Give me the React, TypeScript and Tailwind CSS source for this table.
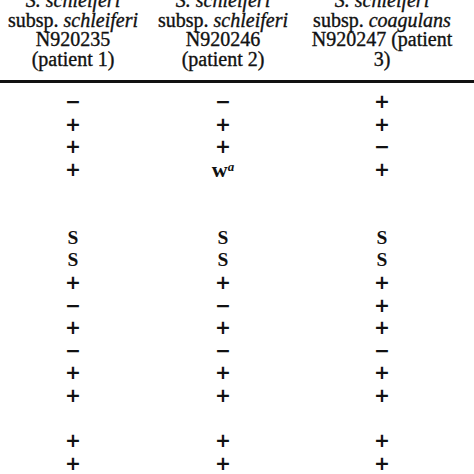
import React from "react";

type Cell = React.ReactNode;

// the scan uses heavy, wide plus/minus signs
const P = <span className="[font-family:'DejaVu_Sans',sans-serif] text-[19px] font-bold">+</span>;
const M = <span className="[font-family:'DejaVu_Sans',sans-serif] text-[19px] font-bold">−</span>;
const S = <span className="text-[19.5px] font-bold">S</span>;
const W = (
  <span className="text-[22px] font-bold">
    w<span className="relative -top-[6px] text-[13px] italic">a</span>
  </span>
);

const rows: (Cell[] | null)[] = [
  [M, M, P],
  [P, P, P],
  [P, P, M],
  [P, W, P],
  null,
  null,
  [S, S, S],
  [S, S, S],
  [P, P, P],
  [M, M, P],
  [P, P, P],
  [M, M, M],
  [P, P, P],
  [P, P, P],
  null,
  [P, P, P],
  [P, P, P],
];

export default function App() {
  return (
    <main
      className="h-[474px] w-[474px] overflow-hidden bg-white text-[#111]"
      style={{ fontFamily: '"Liberation Serif", "Times New Roman", serif' }}
    >
      {/* Header */}
      <div className="-mt-[9px] grid grid-cols-[146px_154px_164px] text-center text-[20px] leading-[19.5px] [-webkit-text-stroke:0.35px]">
        <div>
          <div><i>S. schleiferi</i></div>
          <div>subsp. <i>schleiferi</i></div>
          <div>N920235</div>
          <div>(patient 1)</div>
        </div>
        <div>
          <div><i>S. schleiferi</i></div>
          <div>subsp. <i>schleiferi</i></div>
          <div>N920246</div>
          <div>(patient 2)</div>
        </div>
        <div>
          <div><i>S. schleiferi</i></div>
          <div>subsp. <i>coagulans</i></div>
          <div>N920247 (patient</div>
          <div>3)</div>
        </div>
      </div>

      <div className="mt-[11px] h-[2.5px] w-full bg-[#111]" />

      {/* Body */}
      <div className="mt-[8px] grid grid-cols-[146px_154px_164px] text-center">
        {rows.map((r, i) =>
          r ? (
            r.map((c, j) => (
              <div key={`${i}-${j}`} className="flex h-[22.6px] items-center justify-center leading-none">
                {c}
              </div>
            ))
          ) : (
            <div key={i} className="col-span-3 h-[22.6px]" />
          )
        )}
      </div>
    </main>
  );
}
